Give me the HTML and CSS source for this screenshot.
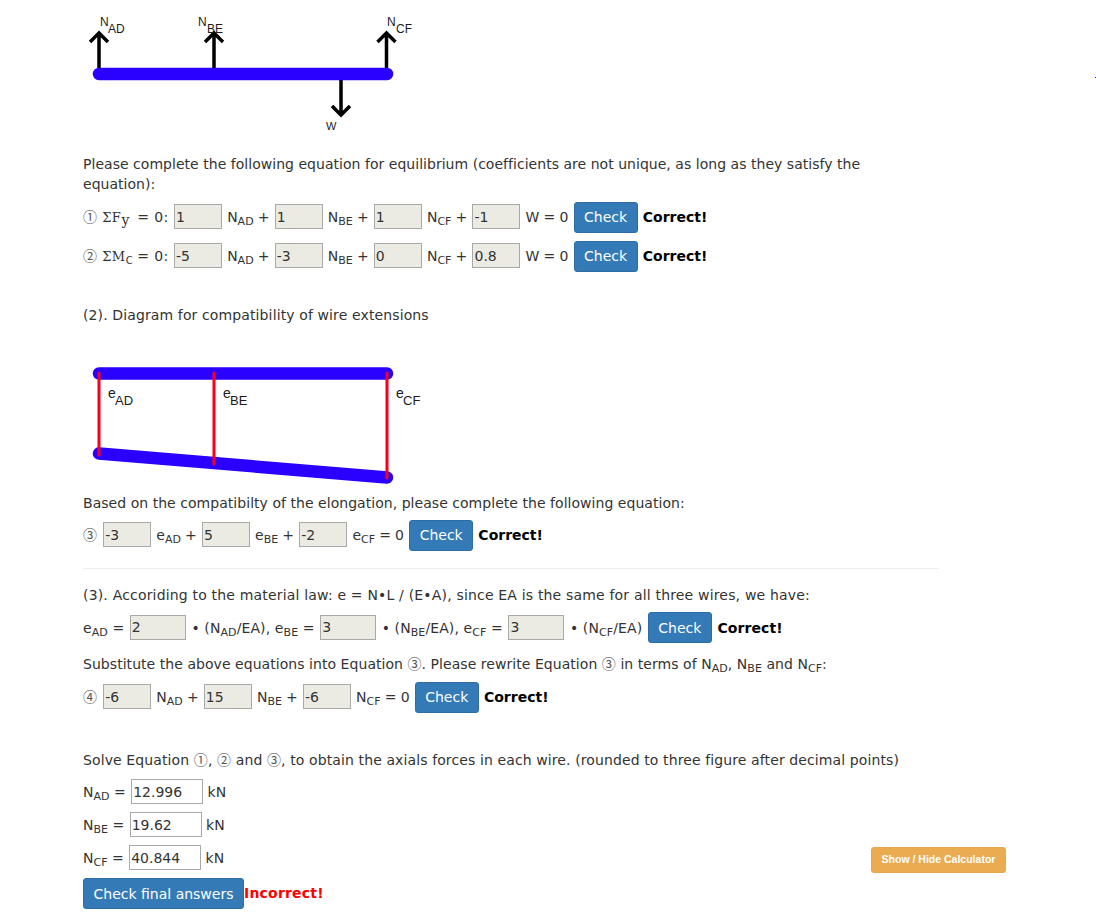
FILE: index.html
```html
<!DOCTYPE html>
<html>
    <head>
        <title>Wire forces</title>
        <link rel="stylesheet" href="styles.css">
    </head>
    <body>
        <div id="content">
            <svg class="diagram fbd" width="360" height="140" viewBox="0 0 360 140">
                <g class="force">
                    <path d="M29 68V34M20 42L29 33L38 42"/>
                    <path d="M144 68V34M135 42L144 33L153 42"/>
                    <path d="M316.500 68V34M307.500 42L316.500 33L325.500 42"/>
                    <path d="M271 80V114M262 106L271 115L280 106"/>
                </g>
                <line class="beam" x1="29" y1="74" x2="317" y2="74"/>
                <text class="lbl" x="30" y="26">N</text><text class="lbl" x="38" y="33">AD</text>
                <text class="lbl" x="128" y="26">N</text><text class="lbl" x="137" y="33">BE</text>
                <text class="lbl" x="317" y="26">N</text><text class="lbl" x="326" y="33">CF</text>
                <text class="lbl-w" x="256" y="130">W</text>
            </svg>

            <p class="intro">Please complete the following equation for equilibrium (coefficients are not unique, as long as they satisfy the equation):</p>

            <div class="eq">
                <span class="num">①</span> <span class="serif">ΣF<sub class="big">y</sub></span> <span class="zero">= 0:</span> <input class="coef" value="1"> N<sub>AD</sub> + <input class="coef" value="1"> N<sub>BE</sub> + <input class="coef" value="1"> N<sub>CF</sub> + <input class="coef" value="-1"> W = 0 <button class="btn">Check</button> <strong>Correct!</strong>
            </div>
            <div class="eq">
                <span class="num">②</span> <span class="serif">ΣM<sub>C</sub></span> <span class="zero">= 0:</span> <input class="coef" value="-5"> N<sub>AD</sub> + <input class="coef" value="-3"> N<sub>BE</sub> + <input class="coef" value="0"> N<sub>CF</sub> + <input class="coef" value="0.8"> W = 0 <button class="btn">Check</button> <strong>Correct!</strong>
            </div>

            <p class="heading2">(2). Diagram for compatibility of wire extensions</p>

            <svg class="diagram ext" width="360" height="140" viewBox="0 0 360 140">
                <line class="beam" x1="29" y1="22.500" x2="317" y2="22.500"/>
                <line class="beam" x1="29" y1="102.500" x2="317" y2="126.500"/>
                <line class="wire" x1="29" y1="22" x2="29" y2="104"/>
                <line class="wire" x1="144" y1="22" x2="144" y2="113"/>
                <line class="wire" x1="317" y1="22" x2="317" y2="127"/>
                <text class="lbl-e" x="38" y="47">e</text><text class="lbl-lg" x="45" y="54">AD</text>
                <text class="lbl-e" x="153" y="47">e</text><text class="lbl-lg" x="160" y="54">BE</text>
                <text class="lbl-e" x="326" y="47">e</text><text class="lbl-lg" x="333" y="54">CF</text>
            </svg>

            <p class="based">Based on the compatibilty of the elongation, please complete the following equation:</p>
            <div class="eq">
                <span class="num">③</span> <input class="coef" value="-3"> e<sub>AD</sub> + <input class="coef" value="5"> e<sub>BE</sub> + <input class="coef" value="-2"> e<sub>CF</sub> = 0 <button class="btn">Check</button> <strong>Correct!</strong>
            </div>

            <hr>

            <p class="law">(3). Accoriding to the material law: e = N•L / (E•A), since EA is the same for all three wires, we have:</p>
            <div class="eq loose">
                e<sub>AD</sub> = <input class="coef wide" value="2"> • (N<sub>AD</sub>/EA), e<sub>BE</sub> = <input class="coef wide" value="3"> • (N<sub>BE</sub>/EA), e<sub>CF</sub> = <input class="coef wide" value="3"> • (N<sub>CF</sub>/EA) <button class="btn">Check</button> <strong>Correct!</strong>
            </div>
            <p class="subst">Substitute the above equations into Equation <span class="cjk">③</span>. Please rewrite Equation <span class="cjk">③</span> in terms of N<sub>AD</sub>, N<sub>BE</sub> and N<sub>CF</sub>:</p>
            <div class="eq">
                <span class="num">④</span> <input class="coef" value="-6"> N<sub>AD</sub> + <input class="coef" value="15"> N<sub>BE</sub> + <input class="coef" value="-6"> N<sub>CF</sub> = 0 <button class="btn">Check</button> <strong>Correct!</strong>
            </div>

            <p class="solve">Solve Equation <span class="cjk">①</span>, <span class="cjk">②</span> and <span class="cjk">③</span>, to obtain the axials forces in each wire. (rounded to three figure after decimal points)</p>
            <div class="answer">N<sub>AD</sub> = <input class="final" value="12.996"> kN</div>
            <div class="answer">N<sub>BE</sub> = <input class="final" value="19.62"> kN</div>
            <div class="answer">N<sub>CF</sub> = <input class="final" value="40.844"> kN</div>
            <div class="submit">
                <button class="btn">Check final answers</button><strong class="wrong">Incorrect!</strong>
            </div>

            <button class="calc">Show / Hide Calculator</button>
            <div class="speck"></div>
        </div>
    </body>
</html>
```

FILE: styles.css
```css
html {
    height:100%;
}

body {
    margin:0;
    padding:0;
    background:#fff;
    color:#333;
    font-family:"DejaVu Sans", sans-serif;
    font-size:14px;
    line-height:20px;
}

#content {
    position:relative;
    height:913px;
    padding-left:83px;
    overflow:hidden;
}

p {
    margin:0;
}

sub {
    font-size:11px;
    line-height:0;
    vertical-align:-3px;
}

.diagram {
    display:block;
    margin-left:-13px;
}

.force {
    fill:none;
    stroke:#000;
    stroke-width:3.500;
}

.beam {
    stroke:#2a00ff;
    stroke-width:12.500;
    stroke-linecap:round;
}

.wire {
    stroke:#f5001e;
    stroke-width:3;
    stroke-linecap:round;
}

.diagram text {
    font-family:"Liberation Sans", sans-serif;
    fill:#1c1c1c;
}

.lbl {
    font-size:12px;
}

.lbl-w {
    font-size:11px;
}

.lbl-e {
    font-size:14px;
}

.lbl-lg {
    font-size:13px;
}

.intro {
    width:800px;
    margin-top:14px;
    letter-spacing:0.03px;
}

.eq {
    display:block;
    height:39px;
    line-height:31px;
    white-space:nowrap;
    word-spacing:-0.3px;
}

.eq.loose {
    word-spacing:0;
    letter-spacing:0.1px;
}

.intro + .eq {
    margin-top:7px;
}

.num,
.cjk {
    font-family:"Noto Sans CJK SC", sans-serif;
    color:#555;
}

.num {
    margin-right:1px;
}

.serif {
    display:inline-block;
    width:31px;
    font-family:"DejaVu Serif", serif;
    font-size:13px;
    letter-spacing:0.5px;
}

.serif sub {
    font-family:"DejaVu Sans", sans-serif;
    font-size:10px;
}

.serif sub.big {
    font-family:"DejaVu Serif", serif;
    font-size:14px;
}

.zero {
    letter-spacing:0.5px;
}

.coef {
    width:48px;
    height:25px;
    box-sizing:border-box;
    margin:0 1px 3px;
    padding:0 1px;
    border:1px solid #a9a9a9;
    background:#ebebe4;
    color:#333;
    font-family:"DejaVu Sans", sans-serif;
    font-size:14px;
    vertical-align:middle;
}

.coef.wide {
    width:56px;
}

.final {
    width:72px;
    height:25px;
    box-sizing:border-box;
    margin:0 0 2px 1px;
    padding:0 1px;
    border:1px solid #a9a9a9;
    background:#fff;
    color:#333;
    font-family:"DejaVu Sans", sans-serif;
    font-size:14px;
    vertical-align:middle;
}

.btn {
    height:31px;
    margin:0 1px 2px;
    padding:0 9.500px;
    border:1px solid #2e6da4;
    border-radius:3px;
    background:#337ab7;
    color:#fff;
    font-family:"DejaVu Sans", sans-serif;
    font-size:14px;
    vertical-align:middle;
}

strong {
    color:#000;
}

.heading2 {
    margin-top:26px;
    letter-spacing:0.12px;
}

.ext {
    margin-top:26px;
}

.based {
    margin-top:2px;
    letter-spacing:0.04px;
}

.based + .eq {
    margin-top:6px;
}

hr {
    width:856px;
    height:1px;
    margin:10px 0 16px;
    border:0;
    background:#eee;
}

.law {
    letter-spacing:0.18px;
}

.law + .eq {
    margin-top:7px;
}

.subst {
    margin-top:2px;
    letter-spacing:0.05px;
}

.subst + .eq {
    margin-top:7px;
}

.solve {
    margin-top:29px;
    letter-spacing:0.11px;
}

.answer {
    height:33px;
    line-height:25px;
    white-space:nowrap;
}

.solve + .answer {
    margin-top:9px;
}

.submit {
    white-space:nowrap;
}

.submit .btn {
    margin:0;
}

.wrong {
    color:#f00;
    letter-spacing:0.2px;
}

.calc {
    position:absolute;
    left:871px;
    top:847px;
    width:135px;
    height:26px;
    padding:0 0 2px;
    border:1px solid #e5a64c;
    border-radius:3px;
    background:#ebab50;
    color:#fff;
    font-family:"Liberation Sans", sans-serif;
    font-size:10.500px;
    font-weight:bold;
}

.speck {
    position:absolute;
    left:1095px;
    top:77px;
    width:1px;
    height:1px;
    background:#2a00ff;
}
```
